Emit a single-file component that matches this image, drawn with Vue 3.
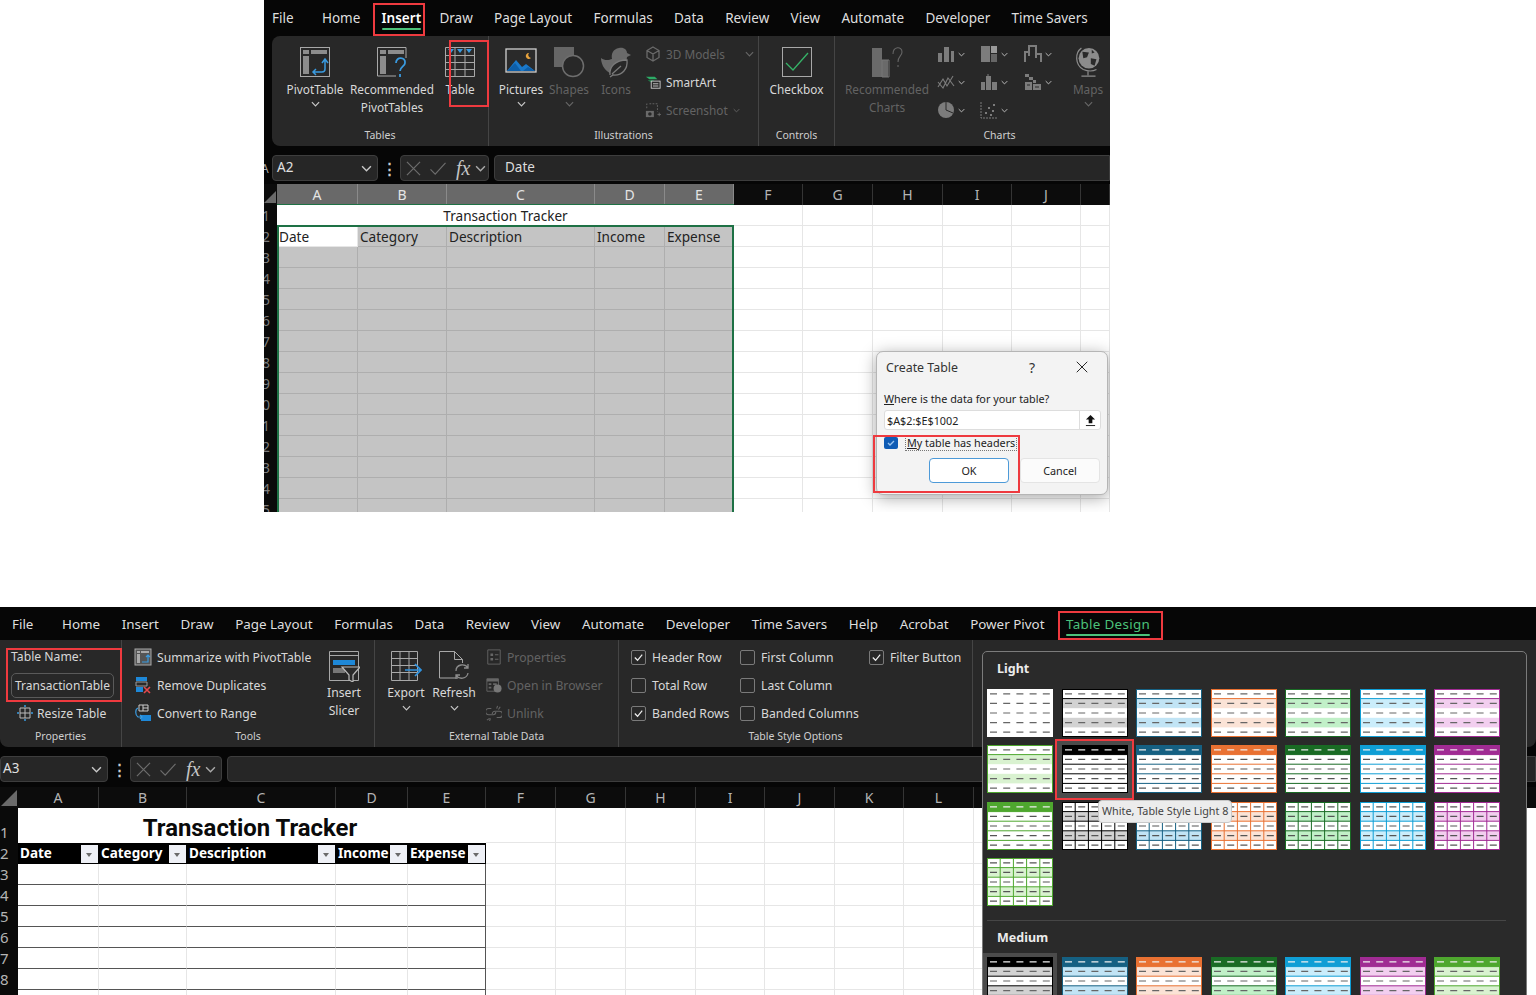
<template>
  <div class="page">
    <!-- icon sprite shared by both ribbons -->
    <svg class="sprite" aria-hidden="true">
      <symbol id="i-chev" viewBox="0 0 10 6"><path d="M1 1l4 4 4-4" fill="none" stroke="currentColor" stroke-width="1.3"/></symbol>
      <symbol id="i-x" viewBox="0 0 16 16"><path d="M1 1l14 14M15 1L1 15" fill="none" stroke="currentColor" stroke-width="1.3"/></symbol>
      <symbol id="i-v" viewBox="0 0 18 16"><path d="M1 9l5 5L17 2" fill="none" stroke="currentColor" stroke-width="1.3"/></symbol>
      <symbol id="i-pivot" viewBox="0 0 32 32">
        <rect x="1.5" y="1.5" width="29" height="29" fill="none" stroke="#a8a8a8"/>
        <path d="M4 4h6v4H4zM12 4h16v4H12zM4 10h6v18H4z" fill="#8c8c8c"/>
        <path d="M14 26h9c2 0 3-1 3-3v-9M23 17l3-4 3 4M17 23l-3 3 3 3" fill="none" stroke="#3a9be0" stroke-width="1.5"/>
      </symbol>
      <symbol id="i-recpivot" viewBox="0 0 32 32">
        <path d="M30 12V1.500H1.500V30H20" fill="none" stroke="#a8a8a8"/>
        <path d="M4 4h6v4H4zM12 4h16v4H12zM4 10h6v18H4z" fill="#8c8c8c"/>
        <path d="M20 17c0-7 10-6 9 0 0 3-5 4-5 8M24 28v3" fill="none" stroke="#3a9be0" stroke-width="1.8"/>
      </symbol>
      <symbol id="i-table" viewBox="0 0 32 32">
        <path d="M1.500 1.500h29v29h-29zM1.500 9.500h29M1.500 16.500h29M1.500 23.500h29M11 1.500v29M21 1.500v29" fill="#2a2a2a" stroke="#a8a8a8"/>
        <path d="M4 3h6l-3 4zM13 3h6l-3 4zM22 3h6l-3 4z" fill="#3a9be0"/>
      </symbol>
      <symbol id="i-pictures" viewBox="0 0 32 28">
        <rect x="1" y="1" width="30" height="23" fill="#2a2a2a" stroke="#d0d0d0" stroke-width="1.300"/>
        <path d="M2 23l9-11 6 7 4-3 9 7z" fill="#1a78c9"/>
        <path d="M2 23l8-8 6 8zM18 23l5-4 7 4z" fill="#0d5ea8"/>
        <path d="M24 5a3 3 0 1 0 2 5 3 3 0 0 1-2-5z" fill="#e8a33d"/>
      </symbol>
      <symbol id="i-shapes" viewBox="0 0 32 32">
        <rect x="1" y="1" width="20" height="20" fill="#666"/>
        <circle cx="20" cy="20" r="10.500" fill="#282828" stroke="#6e6e6e" stroke-width="1.500"/>
      </symbol>
      <symbol id="i-icons" viewBox="0 0 32 32">
        <path d="M1 12c4 3 8 2 11 1-1-5 1-10 7-11 5-1 8 2 8 5l4 2-4 2c0 4-2 7-6 9l-8 8c-7-1-12-9-12-16z" fill="#6a6a6a"/>
        <path d="M10 29c-1-8 5-15 17-15 1 9-5 16-14 15l-3 2M12 28l9-8" fill="#282828" stroke="#7a7a7a" stroke-width="1.300"/>
      </symbol>
      <symbol id="i-cube" viewBox="0 0 16 16"><path d="M8 1l6 3.500v7L8 15l-6-3.500v-7zM2 4.500L8 8l6-3.500M8 8v7" fill="none" stroke="#6a6a6a" stroke-width="1.300"/></symbol>
      <symbol id="i-smartart" viewBox="0 0 18 16">
        <path d="M1 2h10l3 3H5z" fill="#2dab66"/><path d="M3 6h7l-2 3z" fill="#1f8a4f"/>
        <rect x="7" y="7" width="10" height="8" fill="#2a2a2a" stroke="#cfcfcf"/><path d="M9 10h6M9 12.500h6" stroke="#cfcfcf"/>
      </symbol>
      <symbol id="i-screenshot" viewBox="0 0 18 18">
        <path d="M5 2h9v9M2 7V2h1" fill="none" stroke="#6a6a6a" stroke-dasharray="2 1.500"/>
        <rect x="1" y="10" width="9" height="7" fill="#6a6a6a"/><circle cx="5.500" cy="13.500" r="2" fill="#282828"/><path d="M14 14h4M16 12v4" stroke="#6a6a6a"/>
      </symbol>
      <symbol id="i-checkbox" viewBox="0 0 32 32">
        <rect x="1.500" y="1.500" width="29" height="29" fill="none" stroke="#a8a8a8"/>
        <path d="M5 17l7 7L27 7" fill="none" stroke="#36b368" stroke-width="1.300"/>
      </symbol>
      <symbol id="i-reccharts" viewBox="0 0 32 32">
        <path d="M1 2h10v29H1zM11 14h6v17h-6z" fill="#6a6a6a"/><path d="M11 14h7v17h-7z" fill="none" stroke="#777"/>
        <path d="M22 8c0-8 9-8 9-2 0 4-4 4-4 10M27 19v2" fill="none" stroke="#666" stroke-width="1.100"/>
      </symbol>
      <symbol id="i-bars" viewBox="0 0 18 18"><path d="M1 8h4v9H1zM7 2h5v15H7zM14 6h3v11h-3z" fill="#7c7c7c"/></symbol>
      <symbol id="i-treemap" viewBox="0 0 18 18"><path d="M1 1h9v16H1z" fill="#7c7c7c"/><path d="M11 1h6v7h-6z" fill="#9a9a9a"/><path d="M11 9h6v8h-6z" fill="#666"/></symbol>
      <symbol id="i-funnel" viewBox="0 0 18 18"><path d="M1 17V7h4V1h7v8h5v8M5 7v4M12 9v4" fill="none" stroke="#7c7c7c" stroke-width="2"/></symbol>
      <symbol id="i-line" viewBox="0 0 18 18"><path d="M1 14l5-8 4 7 6-10M1 9l5 6 5-10 6 8" fill="none" stroke="#7c7c7c" stroke-width="1.100"/></symbol>
      <symbol id="i-stat" viewBox="0 0 18 18"><path d="M1 9h4v8H1zM6 3h5v14H6zM12 9h5v8h-5z" fill="#7c7c7c"/><path d="M8 1v3" stroke="#7c7c7c"/></symbol>
      <symbol id="i-water" viewBox="0 0 18 18"><path d="M1 1h4v3H1zM5 4h4v3H5zM9 7h3v3H9zM1 9h7v8H1zM9 11h8v6H9z" fill="#7c7c7c"/><path d="M3 12h3M11 14h4" stroke="#282828"/></symbol>
      <symbol id="i-pie" viewBox="0 0 18 18"><circle cx="9" cy="9" r="8" fill="#7c7c7c"/><path d="M9 9V1M9 9l7 3" stroke="#282828"/></symbol>
      <symbol id="i-scatter" viewBox="0 0 18 18"><path d="M1 1v16h16" fill="none" stroke="#7c7c7c" stroke-dasharray="2 1"/><path d="M5 12h2M8 7h2M12 10h2M13 4h2M10 14h2" stroke="#7c7c7c" stroke-width="2"/></symbol>
      <symbol id="i-globe" viewBox="0 0 30 34">
        <circle cx="16" cy="13" r="11" fill="#8c8c8c"/>
        <path d="M9 6l7 1-2 5-4 1zM18 13l6 1-2 7-4-2zM19 4l3 3-3 1z" fill="#2a2a2a"/>
        <path d="M8 2C1 7 1 20 10 25c5 2 10 2 14 0M15 27v4M8 32h15" fill="none" stroke="#8c8c8c" stroke-width="1.300"/>
      </symbol>
      <symbol id="i-summarize" viewBox="0 0 18 18">
        <rect x="1" y="1" width="16" height="16" fill="#555" stroke="#aaa"/><path d="M3 3h3v2H3zM7 3h8v2H7zM3 6h3v9H3z" fill="#aaa"/>
        <path d="M8 14h6V7M12 9l2-2 2 2" fill="none" stroke="#3a9be0" stroke-width="1.200"/>
      </symbol>
      <symbol id="i-dupes" viewBox="0 0 18 18">
        <path d="M2 1h11v4H2z" fill="#1e88d8"/><path d="M2 6h11v4H2z" fill="#2a2a2a" stroke="#9a9a9a"/><path d="M2 11h7v5H2z" fill="#1e88d8"/>
        <path d="M10 11l6 6M16 11l-6 6" stroke="#e5484d" stroke-width="1.600"/>
      </symbol>
      <symbol id="i-convert" viewBox="0 0 18 18">
        <path d="M5 1h9v6H5zM9 4h5M9 1v6" fill="none" stroke="#ccc"/><path d="M7 11h10v6H7z" fill="#1e88d8"/>
        <path d="M4 4C1 5 1 11 4 13h4M6 11l2 2-2 2" fill="none" stroke="#3a9be0" stroke-width="1.200"/>
      </symbol>
      <symbol id="i-resize" viewBox="0 0 16 16">
        <path d="M3 3h10v10H3zM3 8h10M8 3v10" fill="none" stroke="#bbb"/>
        <path d="M8 0v2M8 14v2M0 8h2M14 8h2" stroke="#3a9be0" stroke-width="1.500"/>
      </symbol>
      <symbol id="i-slicer" viewBox="0 0 32 32">
        <path d="M1.500 1.500h29v29h-29z" fill="none" stroke="#a8a8a8"/><path d="M1.500 5.500h29" stroke="#a8a8a8"/>
        <path d="M5 10h22v5H5z" fill="#1e88d8"/><path d="M5 18h12v5H5z" fill="#777"/>
        <path d="M14 17h18l-7 8v7l-4-2v-5z" fill="#2a2a2a" stroke="#bbb" stroke-width="1.200"/>
      </symbol>
      <symbol id="i-export" viewBox="0 0 32 32">
        <path d="M1.500 1.500h26v29h-26zM1.500 8.500h26M1.500 15.500h26M1.500 22.500h26M10 1.500v29M19 1.500v29" fill="none" stroke="#a8a8a8"/>
        <path d="M15 20h16M25 14l6 6-6 6" fill="none" stroke="#2f93e0" stroke-width="1.700"/>
      </symbol>
      <symbol id="i-refresh" viewBox="0 0 32 32">
        <path d="M20 28H1.500V1.500h15l8 8V13M16.500 1.500v8h8" fill="none" stroke="#a8a8a8"/>
        <path d="M18 21c0-7 9-8 12-3M30 23c-1 6-9 7-12 2M30 14v4h-4M18 29v-4h4" fill="none" stroke="#8c8c8c" stroke-width="1.300"/>
      </symbol>
      <symbol id="i-props" viewBox="0 0 16 18"><path d="M1 1h14v16H1z" fill="none" stroke="#666"/><path d="M4 5h3v3H4zM4 10h3v3H4zM9 6h4v1H9zM9 11h4v1H9z" fill="#666"/></symbol>
      <symbol id="i-browser" viewBox="0 0 18 18"><path d="M1 2h13v14H1z" fill="none" stroke="#666"/><path d="M1 2h13v3H1zM3 7h3v2H3zM8 7h4v2H8zM3 11h3v2H3z" fill="#666"/><circle cx="13" cy="13" r="4.500" fill="#777"/></symbol>
      <symbol id="i-unlink" viewBox="0 0 18 18"><path d="M6 4H3a3 3 0 0 0 0 7h5a3 3 0 0 0 3-3M12 14h3a3 3 0 0 0 0-7h-5a3 3 0 0 0-3 3M13 1l-1 3M16 2l-2 3M1 17l3-2M4 18l1-3" fill="none" stroke="#666" stroke-width="1.200"/></symbol>
    </svg>

    <!-- upper screenshot -->
    <section class="shot shot-top">
      <nav class="tabs top-tabs">
        <span v-for="t in topTabs" :key="t" class="tab" :class="{ active: t === 'Insert' }">{{ t }}</span>
      </nav>

      <div class="ribbon top-ribbon">
        <div class="group g-tables">
          <div class="gbody">
            <div class="big w-pivot"><svg class="ico32"><use href="#i-pivot"/></svg><span>PivotTable</span><svg class="chev"><use href="#i-chev"/></svg></div>
            <div class="big w-rec"><svg class="ico32"><use href="#i-recpivot"/></svg><span>Recommended<br>PivotTables</span></div>
            <div class="big w-tbl"><svg class="ico32"><use href="#i-table"/></svg><span>Table</span></div>
          </div>
          <div class="glabel">Tables</div>
        </div>
        <div class="group g-illus">
          <div class="gbody">
            <div class="big w-pic"><svg class="ico32"><use href="#i-pictures"/></svg><span>Pictures</span><svg class="chev"><use href="#i-chev"/></svg></div>
            <div class="big w-shape off"><svg class="ico32"><use href="#i-shapes"/></svg><span>Shapes</span><svg class="chev"><use href="#i-chev"/></svg></div>
            <div class="big w-icons off"><svg class="ico32"><use href="#i-icons"/></svg><span>Icons</span></div>
            <div class="list list-illus">
              <div class="li off"><svg class="ico16"><use href="#i-cube"/></svg><span>3D Models</span><svg class="chev chev-far"><use href="#i-chev"/></svg></div>
              <div class="li"><svg class="ico16"><use href="#i-smartart"/></svg><span>SmartArt</span></div>
              <div class="li off"><svg class="ico16"><use href="#i-screenshot"/></svg><span>Screenshot</span><svg class="chev chev-side"><use href="#i-chev"/></svg></div>
            </div>
          </div>
          <div class="glabel">Illustrations</div>
        </div>
        <div class="group g-controls">
          <div class="gbody">
            <div class="big w-check"><svg class="ico32"><use href="#i-checkbox"/></svg><span>Checkbox</span></div>
          </div>
          <div class="glabel">Controls</div>
        </div>
        <div class="group g-charts last">
          <div class="gbody">
            <div class="big w-recchart off"><svg class="ico32"><use href="#i-reccharts"/></svg><span>Recommended<br>Charts</span></div>
            <div class="chart-grid">
              <div v-for="c in chartIcons" :key="c" class="chart-ico">
                <svg class="ico18"><use :href="'#i-' + c"/></svg><svg class="chev chev-side"><use href="#i-chev"/></svg>
              </div>
            </div>
            <div class="big w-maps off"><svg class="ico32"><use href="#i-globe"/></svg><span>Maps</span><svg class="chev"><use href="#i-chev"/></svg></div>
          </div>
          <div class="glabel glabel-charts">Charts</div>
        </div>
      </div>

      <div class="fbar top-fbar">
        <span class="cut-a">A</span>
        <div class="namebox top-name"><span>A2</span><svg class="chev"><use href="#i-chev"/></svg></div>
        <span class="dots">⋮</span>
        <div class="fxbox top-fx">
          <svg class="mark-x"><use href="#i-x"/></svg><svg class="mark-v"><use href="#i-v"/></svg><i class="fx">fx</i><svg class="chev"><use href="#i-chev"/></svg>
        </div>
        <div class="finput">Date</div>
      </div>

      <div class="sheet">
        <div class="colhead">
          <div class="corner corner-top"></div>
          <div v-for="c in topCols" :key="c.n" class="colcell" :class="{ sel: c.sel }" :style="{ width: c.w + 'px' }">{{ c.n }}</div>
        </div>
        <div class="srow">
          <div class="rowhead rowhead-top">1</div>
          <div class="cell title-top">Transaction Tracker</div>
          <div v-for="c in topRest" :key="c.n" class="cell" :style="{ width: c.w + 'px' }"></div>
        </div>
        <div v-for="r in 14" :key="r" class="srow">
          <div class="rowhead rowhead-top">{{ r + 1 }}</div>
          <div v-for="(c, i) in topCols" :key="c.n" class="cell"
               :class="{ grey: c.sel && !(r === 1 && i === 0) }" :style="{ width: c.w + 'px' }">
            <template v-if="r === 1">{{ topHeads[i] }}</template>
          </div>
        </div>
      </div>
      <div class="range-line"></div>
      <div class="range-box"></div>

      <div class="dialog">
        <div class="dlg-title"><span class="dlg-name">Create Table</span><span class="dlg-q">?</span><svg class="dlg-x"><use href="#i-x"/></svg></div>
        <div class="dlg-label"><u>W</u>here is the data for your table?</div>
        <div class="dlg-input">
          <span>$A$2:$E$1002</span>
          <span class="dlg-up"><svg viewBox="0 0 12 14"><path d="M6 1L1 6h3v4h4V6h3z" fill="#111"/><path d="M1 12.500h10" stroke="#111"/></svg></span>
        </div>
        <div class="dlg-check">
          <span class="blue-box"><svg viewBox="0 0 14 12"><path d="M4 6l2 2 4-4" fill="none" stroke="#9cc6f0" stroke-width="1.300"/></svg></span>
          <span class="dlg-headers"><u>M</u>y table has headers</span>
        </div>
        <div class="dlg-btns"><button class="btn ok">OK</button><button class="btn">Cancel</button></div>
      </div>

      <div class="red r-insert"></div>
      <div class="red r-table"></div>
      <div class="red r-dialog"></div>
    </section>

    <!-- lower screenshot -->
    <section class="shot shot-bottom">
      <nav class="tabs bottom-tabs">
        <span v-for="t in bottomTabs" :key="t" class="tab" :class="{ design: t === 'Table Design' }">{{ t }}</span>
      </nav>

      <div class="ribbon bottom-ribbon">
        <div class="group g-props">
          <div class="gbody props-body">
            <div class="tname-label">Table Name:</div>
            <div class="tname-input">TransactionTable</div>
            <div class="li resize"><svg class="ico16"><use href="#i-resize"/></svg><span>Resize Table</span></div>
          </div>
          <div class="glabel">Properties</div>
        </div>
        <div class="group g-tools">
          <div class="gbody">
            <div class="list list-tools">
              <div class="li"><svg class="ico18"><use href="#i-summarize"/></svg><span>Summarize with PivotTable</span></div>
              <div class="li"><svg class="ico18"><use href="#i-dupes"/></svg><span>Remove Duplicates</span></div>
              <div class="li"><svg class="ico18"><use href="#i-convert"/></svg><span>Convert to Range</span></div>
            </div>
            <div class="big w-slicer"><svg class="ico32"><use href="#i-slicer"/></svg><span>Insert<br>Slicer</span></div>
          </div>
          <div class="glabel">Tools</div>
        </div>
        <div class="group g-ext">
          <div class="gbody">
            <div class="big w-export"><svg class="ico32"><use href="#i-export"/></svg><span>Export</span><svg class="chev"><use href="#i-chev"/></svg></div>
            <div class="big w-refresh"><svg class="ico32"><use href="#i-refresh"/></svg><span>Refresh</span><svg class="chev"><use href="#i-chev"/></svg></div>
            <div class="list list-ext">
              <div class="li off"><svg class="ico16"><use href="#i-props"/></svg><span>Properties</span></div>
              <div class="li off"><svg class="ico16"><use href="#i-browser"/></svg><span>Open in Browser</span></div>
              <div class="li off"><svg class="ico16"><use href="#i-unlink"/></svg><span>Unlink</span></div>
            </div>
          </div>
          <div class="glabel">External Table Data</div>
        </div>
        <div class="group g-opts">
          <div class="gbody">
            <div class="opts">
              <label v-for="o in styleOptions" :key="o.t" class="opt">
                <span class="cb"><svg v-if="o.on" viewBox="0 0 14 14"><path d="M3 7l3 3 5-6" fill="none" stroke="#eee" stroke-width="1.300"/></svg></span>{{ o.t }}
              </label>
            </div>
          </div>
          <div class="glabel">Table Style Options</div>
        </div>
      </div>

      <div class="fbar bottom-fbar">
        <div class="namebox bottom-name"><span>A3</span><svg class="chev"><use href="#i-chev"/></svg></div>
        <span class="dots">⋮</span>
        <div class="fxbox bottom-fx">
          <svg class="mark-x"><use href="#i-x"/></svg><svg class="mark-v"><use href="#i-v"/></svg><i class="fx">fx</i><svg class="chev"><use href="#i-chev"/></svg>
        </div>
        <div class="finput"></div>
      </div>

      <div class="sheet">
        <div class="colhead colhead-bottom">
          <div class="corner corner-bottom"></div>
          <div v-for="c in bottomCols" :key="c.n" class="colcell" :style="{ width: c.w + 'px' }">{{ c.n }}</div>
        </div>
        <div class="srow row-title">
          <div class="rowhead rowhead-bottom">1</div>
          <div class="cell title-bottom">Transaction Tracker</div>
          <div v-for="c in bottomRest" :key="c.n" class="cell" :style="{ width: c.w + 'px' }"></div>
        </div>
        <div class="srow">
          <div class="rowhead rowhead-bottom">2</div>
          <div v-for="c in bottomTable" :key="c.n" class="cell th" :style="{ width: c.w + 'px' }">
            {{ c.head }}<span class="filter"></span>
          </div>
          <div v-for="c in bottomRest" :key="c.n" class="cell" :style="{ width: c.w + 'px' }"></div>
        </div>
        <div v-for="r in 7" :key="r" class="srow">
          <div class="rowhead rowhead-bottom">{{ r + 2 }}</div>
          <div v-for="(c, i) in bottomTable" :key="c.n" class="cell td" :class="{ 'td-last': i === 4 }" :style="{ width: c.w + 'px' }"></div>
          <div v-for="c in bottomRest" :key="c.n" class="cell" :style="{ width: c.w + 'px' }"></div>
        </div>
      </div>

      <div class="gallery">
        <div class="gal-title">Light</div>
        <div class="thumbs">
          <div v-for="(t, i) in lightThumbs" :key="i" class="thumb" :class="{ hovered: i === 8 }">
            <svg viewBox="0 0 66 48" width="66" height="48">
              <rect width="66" height="48" fill="#fff"/>
              <rect v-for="b in t.bands" :key="b" x="0" :y="b * 9.6" width="66" height="9.6" :fill="t.band"/>
              <rect v-if="t.head" width="66" height="9.6" :fill="t.color"/>
              <path v-if="t.lines" :d="t.lines" :stroke="t.color" fill="none"/>
              <path :d="dashes" :stroke="t.dash" stroke-width="1.200"/>
              <path :d="headDashes" :stroke="t.head ? '#eee' : t.dash" stroke-width="1.200"/>
              <rect v-if="t.border" x=".5" y=".5" width="65" height="47" fill="none" :stroke="t.color"/>
            </svg>
          </div>
        </div>
        <div class="gal-divider"></div>
        <div class="gal-title gal-medium">Medium</div>
        <div class="thumbs">
          <div v-for="(t, i) in mediumThumbs" :key="i" class="thumb" :class="{ current: i === 0 }">
            <svg viewBox="0 0 66 48" width="66" height="48">
              <rect width="66" height="48" fill="#fff"/>
              <rect v-for="b in t.bands" :key="b" x="0" :y="b * 9.6" width="66" height="9.6" :fill="t.band"/>
              <rect width="66" height="9.6" :fill="t.color"/>
              <path :d="t.lines" :stroke="t.color" fill="none"/>
              <path :d="dashes" :stroke="t.dash" stroke-width="1.200"/>
              <path :d="headDashes" stroke="#eee" stroke-width="1.200"/>
              <rect x=".5" y=".5" width="65" height="47" fill="none" :stroke="t.color"/>
            </svg>
          </div>
        </div>
        <div class="red r-thumb"></div>
        <div class="tooltip">White, Table Style Light 8</div>
      </div>

      <div class="red r-name"></div>
      <div class="red r-design"></div>
    </section>
  </div>
</template>

<script setup>
const topTabs = ['File', 'Home', 'Insert', 'Draw', 'Page Layout', 'Formulas', 'Data', 'Review', 'View', 'Automate', 'Developer', 'Time Savers']
const bottomTabs = ['File', 'Home', 'Insert', 'Draw', 'Page Layout', 'Formulas', 'Data', 'Review', 'View', 'Automate', 'Developer', 'Time Savers', 'Help', 'Acrobat', 'Power Pivot', 'Table Design']

const chartIcons = ['bars', 'treemap', 'funnel', 'line', 'stat', 'water', 'pie', 'scatter']

const topCols = [
  { n: 'A', w: 81, sel: true }, { n: 'B', w: 89, sel: true }, { n: 'C', w: 148, sel: true },
  { n: 'D', w: 70, sel: true }, { n: 'E', w: 69, sel: true }, { n: 'F', w: 69 }, { n: 'G', w: 70 },
  { n: 'H', w: 70 }, { n: 'I', w: 69 }, { n: 'J', w: 69 }, { n: '', w: 29 }
]
const topRest = topCols.filter(c => !c.sel)
const topHeads = ['Date', 'Category', 'Description', 'Income', 'Expense']

const bottomTable = [
  { n: 'A', w: 81, head: 'Date' }, { n: 'B', w: 88, head: 'Category' }, { n: 'C', w: 149, head: 'Description' },
  { n: 'D', w: 72, head: 'Income' }, { n: 'E', w: 78, head: 'Expense' }
]
const bottomRest = [
  { n: 'F', w: 70 }, { n: 'G', w: 70 }, { n: 'H', w: 70 }, { n: 'I', w: 69 }, { n: 'J', w: 70 }, { n: 'K', w: 69 },
  { n: 'L', w: 70 }, { n: 'M', w: 70 }, { n: 'N', w: 70 }, { n: 'O', w: 70 }, { n: 'P', w: 70 }, { n: 'Q', w: 70 }, { n: 'R', w: 60 }
]
const bottomCols = [...bottomTable, ...bottomRest]

const styleOptions = [
  { t: 'Header Row', on: true }, { t: 'First Column', on: false }, { t: 'Filter Button', on: true },
  { t: 'Total Row', on: false }, { t: 'Last Column', on: false },
  { t: 'Banded Rows', on: true }, { t: 'Banded Columns', on: false }
]

// table style thumbnails
const palette = {
  black: { color: '#000', band: '#d2d2d2' },
  blue: { color: '#156082', band: '#c1e4f5' },
  orange: { color: '#e97132', band: '#fbe3d6' },
  green: { color: '#196b24', band: '#c1f0c8' },
  cyan: { color: '#0f9ed5', band: '#caedfb' },
  purple: { color: '#a02b93', band: '#f2ceef' },
  lime: { color: '#4ea72e', band: '#d9f2d0' }
}
const order = ['black', 'blue', 'orange', 'green', 'cyan', 'purple', 'lime']
const hLines = 'M0 9.600H66M0 19.200H66M0 28.800H66M0 38.400H66'
const vLines = 'M13.200 0V48M26.400 0V48M39.600 0V48M52.800 0V48'

let dashes = ''
let headDashes = ''
for (let col = 0; col < 5; col++) {
  const x = 3 + col * 13.2
  headDashes += `M${x} 4.800h7`
  for (let row = 1; row < 5; row++) dashes += `M${x} ${4.8 + row * 9.6}h7`
}

const banded = name => ({ ...palette[name], bands: [1, 3], lines: 'M0 9.600H66', head: false, border: true, dash: '#666' })
const header = name => ({ ...palette[name], bands: [], lines: hLines, head: true, border: true, dash: '#555' })
const grid = name => ({ ...palette[name], bands: [1, 3], lines: hLines + vLines, head: false, border: true, dash: '#555' })

const lightThumbs = [
  { color: '#fff', band: '#fff', bands: [], lines: '', head: false, border: false, dash: '#666' },
  ...order.map(banded),
  ...order.map(header),
  ...order.map(grid)
]

const mediumThumbs = order.map(name => ({ ...palette[name], bands: [1, 3], lines: hLines, dash: '#666' }))
</script>

<style>
html, body { background: #fff; }
</style>

<style scoped>
.page {
  width: 1536px;
  height: 995px;
  overflow: hidden;
  display: flex;
  flex-direction: column;
  background: #fff;
  font-family: "Noto Sans", "Open Sans", sans-serif;
  color: #ddd;
}
.sprite { position: absolute; width: 0; height: 0; }

.shot { position: relative; overflow: hidden; }
.shot-top { width: 846px; height: 512px; margin-left: 264px; margin-bottom: 95px; background: #060606; }
.shot-bottom { width: 1536px; height: 388px; background: #060606; }

/* tabs */
.tabs { display: flex; color: #dedede; align-items: center; }
.tabs .tab:first-child { margin-right: 7px; }
.top-tabs { height: 36px; padding-left: 8px; gap: 21.300px; font-size: 13.500px; }
.bottom-tabs { height: 33px; padding-left: 12px; gap: 21.600px; font-size: 13.400px; }
.tab { position: relative; white-space: nowrap; }
.active { color: #fff; font-weight: 600; margin-right: -3px; }
.active::after, .design::after {
  content: ""; position: absolute; left: 0; right: 0; bottom: -3px; height: 2px; background: #4cc27a; border-radius: 1px;
}
.design { color: #4cc27a; letter-spacing: .3px; }

/* ribbon */
.ribbon { display: flex; background: #282828; color: #d8d8d8; }
.top-ribbon { height: 110px; margin-left: 8px; border-radius: 8px 0 0 8px; font-size: 11.800px; }
.bottom-ribbon { height: 107px; border-radius: 0 0 8px 8px; font-size: 12.200px; }
.group { display: flex; flex-direction: column; border-right: 1px solid #454545; box-sizing: border-box; }
.group.last { border-right: none; }
.gbody { flex: 1; display: flex; padding-top: 10px; min-height: 0; }
.glabel { height: 22px; line-height: 22px; text-align: center; font-size: 10.500px; color: #cfcfcf; flex: none; }
.glabel-charts { padding-left: 54px; }

.g-tables { width: 217px; }
.g-tables .gbody { padding-left: 11px; gap: 3px; }
.g-illus { width: 270px; }
.g-illus .gbody { padding-left: 11px; }
.g-controls { width: 76px; }
.g-charts { width: 275px; }
.g-props { width: 122px; }
.g-tools { width: 253px; }
.g-ext { width: 244px; }
.g-opts { width: 354px; }

.big { display: flex; flex-direction: column; align-items: center; text-align: center; line-height: 18px; flex: none; }
.big span { margin-top: 2px; white-space: nowrap; }
.off { color: #636363; }
.ico32 { width: 32px; height: 32px; flex: none; }
.ico18 { width: 18px; height: 18px; flex: none; }
.ico16 { width: 16px; height: 16px; flex: none; }
.chev { width: 9px; height: 6px; flex: none; margin-top: 3px; color: #c8c8c8; }
.off .chev { color: #666; }

.w-pivot { width: 64px; }
.w-rec { width: 84px; }
.w-tbl { width: 40px; margin-left: 3px; }
.w-pic { width: 42px; }
.w-shape { width: 48px; margin-left: 3px; }
.w-icons { width: 40px; margin-left: 3px; }
.w-check { width: 75px; }
.w-recchart { width: 86px; margin-left: 9px; }
.w-maps { width: 40px; margin-left: 4px; }
.w-slicer { width: 36px; margin-left: 6px; }
.w-export { width: 48px; margin-left: 7px; }
.w-refresh { width: 48px; }

.list { display: flex; flex-direction: column; margin-top: -6px; }
.li { display: flex; align-items: center; gap: 5px; height: 28px; white-space: nowrap; flex: none; }
.li .chev { margin-top: 0; }
.chev-far { margin-left: 15px; }
.chev-side { margin-top: 0; width: 7px; height: 5px; }
.list-illus { margin-left: 9px; }
.list-tools { margin-left: 12px; width: 186px; margin-top: -7px; }
.list-ext { margin-left: 8px; margin-top: -7px; }

.chart-grid { display: grid; grid-template-columns: 43px 44px 40px; grid-auto-rows: 28px; margin: -6px 0 0 7px; width: 127px; }
.chart-ico { display: flex; align-items: center; gap: 3px; }

/* table design ribbon */
.props-body { flex-direction: column; padding: 8px 0 0 11px; }
.tname-label { line-height: 18px; }
.tname-input {
  width: 103px; height: 25px; margin-top: 7px; box-sizing: border-box; border: 1px solid #5a5a5a;
  border-radius: 5px; line-height: 23px; text-align: center; white-space: nowrap; font-size: 12px; flex: none;
}
.resize { margin: 1px 0 0 6px; gap: 4px; }
.opts { display: grid; grid-template-columns: 109px 129px 100px; grid-auto-rows: 28px; margin: -7px 0 0 12px; }
.opt { display: flex; align-items: center; gap: 6px; white-space: nowrap; }
.cb { width: 15px; height: 15px; box-sizing: border-box; border: 1px solid #7a7a7a; border-radius: 2px; flex: none; }
.cb svg { display: block; width: 13px; height: 13px; }
.opts .opt:nth-child(4) { grid-column: 1; }
.opts .opt:nth-child(6) { grid-column: 1; }

/* formula bar */
.fbar { display: flex; align-items: center; font-size: 13.500px; }
.top-fbar { height: 26px; margin: 9px 0 3px 0; }
.bottom-fbar { height: 26px; margin: 9px 0 5px 0; }
.cut-a { width: 8px; overflow: hidden; font-size: 12px; color: #aaa; text-indent: -3px; }
.namebox, .fxbox, .finput { height: 26px; box-sizing: border-box; background: #262626; border: 1px solid #3d3d3d; border-radius: 4px; display: flex; align-items: center; padding-bottom: 2px; }
.namebox { justify-content: space-between; padding-left: 4px; padding-right: 5px; color: #e0e0e0; }
.namebox .chev { margin: 2px 0 0; width: 11px; height: 7px; }
.top-name { width: 106px; }
.bottom-name { width: 108px; padding-left: 2px; }
.dots { width: 22px; text-align: center; color: #ccc; font-size: 15px; font-weight: 700; }
.fxbox { color: #6c6c6c; padding-left: 5px; padding-bottom: 0; }
.top-fx { width: 89px; }
.bottom-fx { width: 92px; }
.fxbox .chev { margin: 0 0 0 4px; color: #aaa; width: 11px; height: 7px; }
.mark-x { width: 15px; height: 15px; flex: none; }
.mark-v { width: 18px; height: 15px; flex: none; margin-left: 8px; }
.fx { font-family: "Liberation Serif", serif; font-size: 20px; color: #c4c4c4; margin-left: 9px; width: 15px; }
.finput { flex: 1; margin-left: 5px; padding-left: 10px; color: #dcdcdc; border-radius: 4px 0 0 4px; }

/* sheet */
.sheet { background: #fff; }
.colhead { display: flex; height: 21px; background: #0c0c0c; font-size: 14px; color: #b4b4b4; }
.corner { flex: none; position: relative; }
.corner::after { content: ""; position: absolute; right: 1px; bottom: 2px; border-style: solid; border-color: transparent #6a6a6a #6a6a6a transparent; }
.corner-top { width: 13px; }
.corner-top::after { border-width: 6px; }
.corner-bottom { width: 18px; }
.corner-bottom::after { border-width: 8px; }
.colcell { flex: none; box-sizing: border-box; border-right: 1px solid #353535; text-align: center; line-height: 22px; }
.colcell.sel { background: #696969; color: #e4e4e4; border-right-color: #8a8a8a; }

.srow { display: flex; height: 21px; }
.rowhead { flex: none; background: #0a0a0a; font-size: 14px; overflow: hidden; white-space: nowrap; display: flex; line-height: 21px; }
.rowhead-top { width: 13px; justify-content: flex-end; padding-right: 7px; box-sizing: border-box; color: #7c7c7c; }
.rowhead-bottom { width: 18px; color: #b4b4b4; font-size: 15px; }
.cell { flex: none; box-sizing: border-box; border-right: 1px solid #e6e6e6; border-bottom: 1px solid #e6e6e6; font-size: 13.600px; color: #222; padding-left: 2px; line-height: 21px; white-space: nowrap; }
.cell.grey { background: #c4c4c4; border-color: #aeaeae; }
.title-top { width: 457px; text-align: center; border-right: none; border-bottom: none; padding-left: 0; }
.row-title { height: 35px; }
.row-title .rowhead { align-items: flex-end; }
.title-bottom { width: 468px; text-align: center; font-family: "Roboto", sans-serif; font-weight: 700; font-size: 23.900px; line-height: 40px; color: #0a0a0a; border: none; padding: 0 4px 0 0; }
.th { background: #000; color: #fff; font-weight: 700; border: none; display: flex; justify-content: space-between; align-items: center; padding-left: 2px; font-size: 13.500px; }
.filter { width: 17px; height: 18px; margin-right: 1px; background: #eef0f6; position: relative; flex: none; }
.filter::after { content: ""; position: absolute; left: 5px; top: 8px; border: 3.500px solid transparent; border-top: 4px solid #6a6a6a; border-bottom: none; }
.td { border-bottom: 1.500px solid #555; }
.td-last { border-right: 1.500px solid #555; }

.range-line { position: absolute; left: 13px; top: 204px; width: 457px; height: 1px; background: #1e7145; }
.range-box { position: absolute; left: 13px; top: 225px; width: 457px; height: 300px; box-sizing: border-box; border: 2px solid #1e7145; }

/* dialog */
.dialog {
  position: absolute; left: 612px; top: 351px; width: 232px; height: 144px; box-sizing: border-box;
  background: #f3f3f3; border: 1px solid #b5b5b5; border-radius: 7px; padding: 0 7px;
  box-shadow: 0 3px 16px rgba(0, 0, 0, .35); color: #222; font-size: 10.800px;
}
.dlg-title { display: flex; align-items: center; height: 30px; padding-left: 2px; font-size: 12.400px; color: #333; }
.dlg-name { width: 143px; }
.dlg-q { width: 47px; font-size: 14px; }
.dlg-x { width: 12px; height: 12px; color: #222; }
.dlg-label { margin-top: 8px; line-height: 18px; }
.dlg-input { margin-top: 2px; height: 20px; width: 217px; box-sizing: border-box; background: #fff; border: 1px solid #ddd; border-radius: 3px; display: flex; align-items: center; justify-content: space-between; padding-left: 2px; }
.dlg-up { width: 20px; height: 18px; border-left: 1px solid #ddd; display: flex; align-items: center; justify-content: center; }
.dlg-up svg { width: 11px; height: 13px; }
.dlg-check { display: flex; align-items: center; gap: 7px; margin-top: 5px; height: 15px; }
.blue-box { width: 14px; height: 12px; background: #0f5cb5; border-radius: 2px; }
.blue-box svg { display: block; }
.dlg-headers { border: 1px dotted #777; line-height: 14px; padding: 0 1px; }
.dlg-btns { display: flex; justify-content: flex-end; gap: 11px; margin-top: 8px; }
.btn { width: 80px; height: 25px; font: inherit; background: #fbfbfb; border: 1px solid #e4e4e4; border-radius: 4px; color: #222; }
.ok { border: 1.500px solid #4d9ad8; background: #fff; }

/* gallery */
.gallery {
  position: absolute; left: 982px; top: 44px; width: 545px; height: 380px; box-sizing: border-box;
  background: #2a2a2a; border: 1px solid #7b7b7b; border-radius: 5px; padding: 0 4px;
}
.gal-title { height: 37px; line-height: 33px; padding-left: 10px; font-size: 12.500px; font-weight: 700; color: #ececec; }
.gal-medium { height: 36px; line-height: 34px; }
.thumbs { display: grid; grid-template-columns: repeat(7, 66px); column-gap: 8.500px; row-gap: 8.400px; }
.thumb { position: relative; height: 48px; }
.thumb svg { display: block; }
.hovered { box-shadow: 0 0 0 5px #4b4b4b; }
.current { box-shadow: 0 0 0 4px #4b4b4b; }
.gal-divider { height: 1px; background: #464646; margin: 14px 16px 0 0; }
.tooltip {
  position: absolute; left: 115px; top: 148px; padding: 0 3px; height: 21px; line-height: 19px; font-size: 10.800px; white-space: nowrap;
  background: #ececec; color: #444; border: 1px solid #c8c8c8; border-radius: 4px;
}

/* red call-outs */
.red { position: absolute; box-sizing: border-box; border: 2.500px solid #ee3a3f; pointer-events: none; }
.r-insert { left: 109px; top: 3px; width: 52px; height: 33px; }
.r-table { left: 185px; top: 40px; width: 40px; height: 67px; }
.r-dialog { left: 609px; top: 435px; width: 147px; height: 58px; }
.r-name { left: 6px; top: 41px; width: 116px; height: 54px; }
.r-design { left: 1058px; top: 4px; width: 105px; height: 29px; }
.r-thumb { left: 72px; top: 87px; width: 79px; height: 61px; }
</style>
